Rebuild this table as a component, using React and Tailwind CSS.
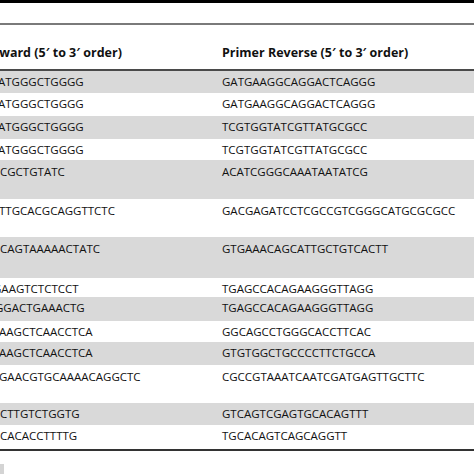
import React from 'react'

const rows = [
  { h: 'h-[22px]', shade: true, l: 'ATGGGCTGGGG', lm: 'ml-[-2px]', r: 'GATGAAGGCAGGACTCAGGG' },
  { h: 'h-[23px]', shade: false, l: 'ATGGGCTGGGG', lm: 'ml-[-2px]', r: 'GATGAAGGCAGGACTCAGGG' },
  { h: 'h-[23px]', shade: true, l: 'ATGGGCTGGGG', lm: 'ml-[-2px]', r: 'TCGTGGTATCGTTATGCGCC' },
  { h: 'h-[21px]', shade: false, l: 'ATGGGCTGGGG', lm: 'ml-[-2px]', r: 'TCGTGGTATCGTTATGCGCC' },
  { h: 'h-[39px]', shade: true, l: 'CGCTGTATC', lm: 'ml-0', r: 'ACATCGGGCAAATAATATCG', tall: true },
  { h: 'h-[38px]', shade: false, l: 'TTGCACGCAGGTTCTC', lm: 'ml-[-1px]', r: 'GACGAGATCCTCGCCGTCGGGCATGCGCGCC', tall: true },
  { h: 'h-[41px]', shade: true, l: 'CAGTAAAAACTATC', lm: 'ml-0', r: 'GTGAAACAGCATTGCTGTCACTT', tall: true },
  { h: 'h-[19px]', shade: false, l: 'GAAGTCTCTCCT', lm: 'ml-[-7px]', r: 'TGAGCCACAGAAGGGTTAGG' },
  { h: 'h-[24px]', shade: true, l: 'GGACTGAAACTG', lm: 'ml-[-5px]', r: 'TGAGCCACAGAAGGGTTAGG' },
  { h: 'h-[21px]', shade: false, l: 'AAGCTCAACCTCA', lm: 'ml-[-1px]', r: 'GGCAGCCTGGGCACCTTCAC' },
  { h: 'h-[23px]', shade: true, l: 'AAGCTCAACCTCA', lm: 'ml-[-1px]', r: 'GTGTGGCTGCCCCTTCTGCCA' },
  { h: 'h-[38px]', shade: false, l: 'GAACGTGCAAAACAGGCTC', lm: 'ml-[-1px]', r: 'CGCCGTAAATCAATCGATGAGTTGCTTC', tall: true },
  { h: 'h-[22px]', shade: true, l: 'CTTGTCTGGTG', lm: 'ml-0', r: 'GTCAGTCGAGTGCACAGTTT' },
  { h: 'h-[24px]', shade: false, l: 'CACACCTTTTG', lm: 'ml-0', r: 'TGCACAGTCAGCAGGTT' },
]

export default function App() {
  return (
    <div className="w-[474px] h-[474px] overflow-hidden bg-white text-[#111] font-['Open_Sans',sans-serif]">
      <div className="h-[3px] bg-black" />
      <div className="h-[20px]" />
      <div className="h-[2px] bg-[#7a7a7a]" />
      <div className="h-[44px] grid grid-cols-[222px_1fr] items-end pb-[8px] text-[12.5px] font-bold leading-[16px] whitespace-nowrap overflow-hidden">
        <div className="ml-[-67px]">Primer Forward (5′ to 3′ order)</div>
        <div>Primer Reverse (5′ to 3′ order)</div>
      </div>
      <div className="h-[2px] bg-[#4a4a4a]" />
      {rows.map((row, i) => (
        <div
          key={i}
          className={`${row.h} ${row.shade ? 'bg-[#d9d9d9]' : 'bg-white'} ${row.tall ? 'pt-[4px]' : 'pt-[3px]'} grid grid-cols-[222px_1fr] text-[11.5px] leading-[16px] whitespace-nowrap overflow-hidden`}
        >
          <div className={row.lm}>{row.l}</div>
          <div>{row.r}</div>
        </div>
      ))}
      <div className="h-[2px] bg-[#333]" />
      <div className="h-[13px]" />
      <div className="h-[11px] w-[4px] bg-[#d4d4d4]" />
    </div>
  )
}
